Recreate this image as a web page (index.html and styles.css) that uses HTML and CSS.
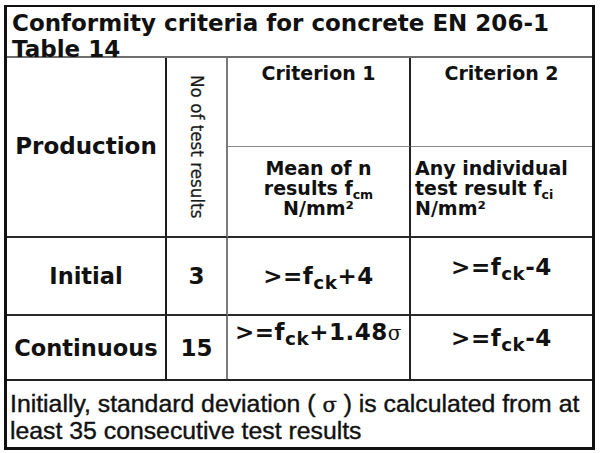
FILE: index.html
```html
<!DOCTYPE html>
<html>
<head>
<meta charset="utf-8">
<link rel="stylesheet" href="styles.css">
</head>
<body>
<div class="sheet">
  <div class="title">Conformity criteria for concrete EN 206-1<br>Table 14</div>
  <div class="grid">
    <div class="cell col1 rowb prod">Production</div>
    <div class="cell col2 rowb count-head"><span class="vert">No of test results</span></div>
    <div class="cell col3 crit">Criterion 1</div>
    <div class="cell crit">Criterion 2</div>
    <div class="cell col3 rowb desc center">Mean of n<br>results f<sub class="small">cm</sub><br>N/mm²</div>
    <div class="cell rowb desc left">Any individual<br>test result f<sub class="small">ci</sub><br>N/mm²</div>

    <div class="cell col1 rowb label">Initial</div>
    <div class="cell col2 rowb label">3</div>
    <div class="cell col3 rowb expr mid"><span>&gt;=f<sub>ck</sub>+4</span></div>
    <div class="cell rowb expr top-b">&gt;=f<sub>ck</sub>-4</div>

    <div class="cell col1 label">Continuous</div>
    <div class="cell col2 label">15</div>
    <div class="cell col3 expr top-a">&gt;=f<sub>ck</sub>+1.48<span class="sigma">σ</span></div>
    <div class="cell expr top-c">&gt;=f<sub>ck</sub>-4</div>
  </div>
  <div class="foot">
    <span class="foot-line">Initially, standard deviation ( <span class="fsig">σ</span> ) is calculated from at</span>
    <span class="foot-line">least 35 consecutive test results</span>
  </div>
</div>
</body>
</html>
```

FILE: styles.css
```css
* { box-sizing: border-box; }
html, body { margin: 0; padding: 0; background: #fff; }
body { color: #111; font-family: "DejaVu Sans", Verdana, sans-serif; font-weight: bold; }

.sheet {
  margin: 5px 0 0 4px;
  width: 591px;
  height: 445px;
  border: 3px solid #111;
  border-top-width: 2px;
  display: flex;
  flex-direction: column;
}

.title {
  height: 51px;
  padding: 3px 0 0 5px;
  font-size: 23px;
  line-height: 26px;
  border-bottom: 2px solid #6e6e6e;
  white-space: nowrap;
}

.grid {
  display: grid;
  grid-template-columns: 160px 61px 183px 181px;
  grid-template-rows: 89px 91px 78px 63px;
}

.cell { min-width: 0; }
.col1 { border-right: 2px solid #1a1a1a; }
.col2 { border-right: 2px solid #7a7a7a; }
.col3 { border-right: 2px solid #222; }
.rowb { border-bottom: 2px solid #2a2a2a; }

.prod {
  grid-row: 1 / 3;
  grid-column: 1;
  display: flex;
  align-items: center;
  justify-content: center;
  font-size: 23px;
  padding-bottom: 2px;
}

.count-head {
  grid-row: 1 / 3;
  grid-column: 2;
  display: flex;
  align-items: center;
  justify-content: center;
}
.vert {
  writing-mode: vertical-rl;
  font-weight: normal;
  font-size: 16.8px;
  color: #1a1a1a;
  -webkit-text-stroke: 0.25px #1a1a1a;
  white-space: nowrap;
}

.crit {
  font-size: 19px;
  text-align: center;
  padding-top: 4px;
  border-bottom: 1px solid #8a8a8a;
}

.desc {
  font-size: 19px;
  line-height: 20px;
  padding-top: 11px;
}
.desc.center { text-align: center; }
.desc.left { text-align: left; padding-left: 4px; }

sub {
  font-size: 0.8em;
  vertical-align: -0.28em;
  line-height: 0;
}
sub.small { font-size: 0.66em; vertical-align: -0.3em; }

.label {
  display: flex;
  align-items: center;
  justify-content: center;
  font-size: 23px;
}
.col1.label { font-size: 22.5px; }

.expr {
  font-size: 23px;
  line-height: 26px;
  letter-spacing: 0.5px;
  text-align: center;
  white-space: nowrap;
}
.expr.mid { display: flex; align-items: center; justify-content: center; }
.expr.top-b { padding-top: 16px; }
.expr.top-a { padding-top: 3px; }
.expr.top-c { padding-top: 9px; }

.sigma {
  font-family: "DejaVu Serif", "Liberation Serif", serif;
  font-weight: normal;
  font-size: 20px;
}

.foot {
  border-top: 2px solid #222;
  flex: 1;
  padding: 10px 0 0 3px;
  font-family: "Liberation Sans", Arial, sans-serif;
  font-weight: normal;
  font-size: 24.8px;
  line-height: 26px;
  color: #111;
  -webkit-text-stroke: 0.4px #111;
}
.foot-line { display: block; white-space: nowrap; }
.fsig { font-family: "DejaVu Serif", "Liberation Serif", serif; font-size: 21px; }
```
